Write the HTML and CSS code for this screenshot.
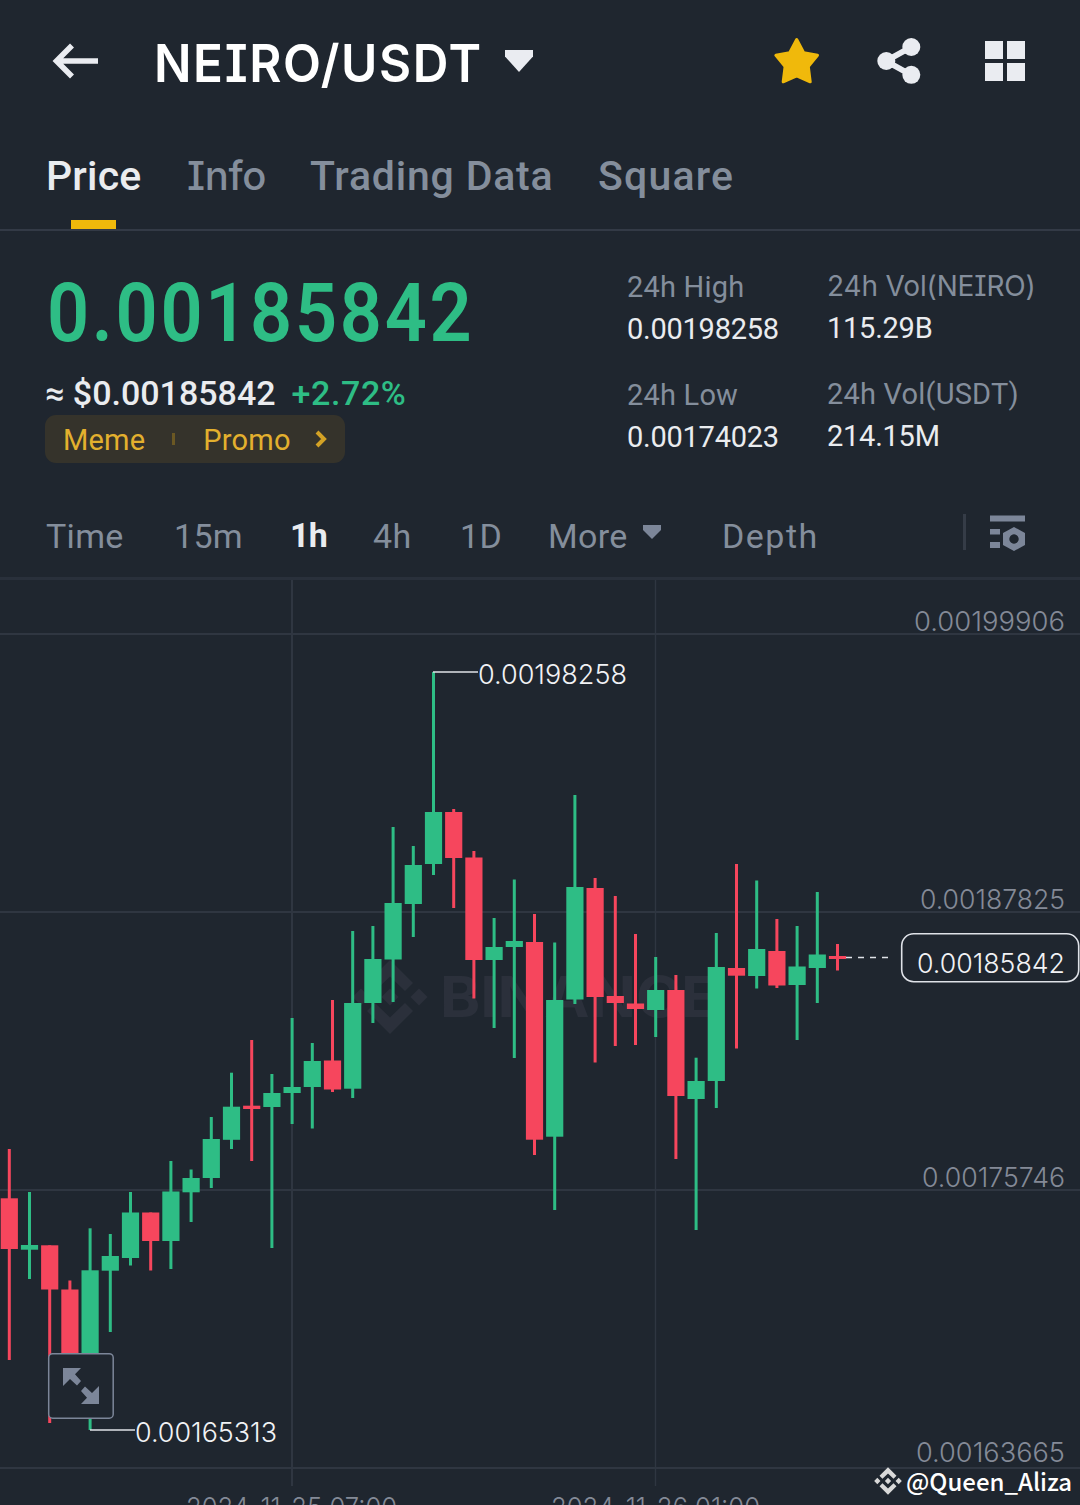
FILE: index.html
```
<!DOCTYPE html>
<html lang="en">
<head>
    <meta charset="UTF-8">
    <meta name="viewport" content="width=device-width, initial-scale=1.0">
    <title>NEIRO/USDT</title>
    <link rel="stylesheet" href="styles.css">
</head>
<body>
    <header class="topbar">
        <svg class="back" width="48" height="48" viewBox="51 37 48 48">
            <path d="M72 45.5L56.5 61L72 76.5M57 61H98"/>
        </svg>
        <h1>NEIRO/USDT</h1>
        <svg class="caret" width="28" height="22" viewBox="0 0 28 22"><path d="M0 0h28v6.5L14 22L0 6.5z"/></svg>
        <div class="actions">
            <svg width="46" height="48" viewBox="774 37 46 48">
                <path class="star" d="M796.7 39.5L803.7 52.7L817.5 55.3L808.3 66.5L810.2 81.8L796.7 75.8L783.2 81.8L785.1 66.5L775.9 55.3L789.7 52.7z"/>
            </svg>
            <svg width="46" height="48" viewBox="876 37 46 48" class="share">
                <path d="M911.3 47L886 61L911.3 75"/>
                <circle cx="911.3" cy="47" r="9"/><circle cx="886.3" cy="61" r="9"/><circle cx="911.3" cy="74.8" r="9"/>
            </svg>
            <svg width="40" height="40" viewBox="0 0 40 40" class="light">
                <path d="M0 0h18v18H0zM22 0h18v18H22zM0 22h18v18H0zM22 22h18v18H22z"/>
            </svg>
        </div>
    </header>

    <nav class="tabs">
        <a class="active">Price</a>
        <a class="info">Info</a>
        <a class="trading">Trading Data</a>
        <a class="square">Square</a>
    </nav>

    <section class="summary">
        <div class="quote">
            <div class="price">0.00185842</div>
            <div class="fiat"><span>≈ $0.00185842</span><span class="change">+2.72%</span></div>
            <div class="tags">
                <span class="meme">Meme</span>
                <i></i>
                <span>Promo</span>
                <svg width="12" height="18" viewBox="0 0 12 18"><path d="M2 2L9 9L2 16"/></svg>
            </div>
        </div>
        <dl class="stats">
            <div><dt>24h High</dt><dd>0.00198258</dd></div>
            <div><dt>24h Low</dt><dd>0.00174023</dd></div>
        </dl>
        <dl class="stats volume">
            <div><dt class="neiro">24h Vol(NEIRO)</dt><dd>115.29B</dd></div>
            <div><dt>24h Vol(USDT)</dt><dd>214.15M</dd></div>
        </dl>
    </section>

    <nav class="intervals">
        <a>Time</a>
        <a>15m</a>
        <a class="active">1h</a>
        <a>4h</a>
        <a>1D</a>
        <a>More <svg width="18" height="14" viewBox="0 0 18 14"><path d="M0 0h18v5L9 14L0 5z"/></svg></a>
        <a class="depth">Depth</a>
        <span class="divider"></span>
        <svg class="settings" width="36" height="37" viewBox="991 515 36 37">
            <path fill-rule="evenodd" d="M991 515.5h35v6H991zM991 529h10v5.5H991zM991 542h10v6H991zM1015 527l11 6v12l-11 6l-11 -6v-12zM1015 534.3a4.7 4.7 0 1 0 .01 0z"/>
        </svg>
    </nav>

    <main class="chart">
        <svg width="1080" height="925" viewBox="0 580 1080 925">
            <defs>
                <symbol id="logo" viewBox="-38 -38 76 76">
                    <path d="M0 -37L23 -14L15 -6L0 -20.500L-15 -6L-23 -14zM0 37L23 14L15 6L0 20.500L-15 6L-23 14zM0 -8.500L8.500 0L0 8.500L-8.500 0zM-29 -8.500L-20.500 0L-29 8.500L-37.500 0zM29 -8.500L37.500 0L29 8.500L20.500 0z"/>
                </symbol>
            </defs>

            <g class="grid">
                <path d="M0 634H1080M0 912H1080M0 1190H1080M0 1468H1080M292 579V1486"/>
                <path class="thin" d="M655.500 579V1486"/>
            </g>

            <g class="watermark">
                <use href="#logo" x="352" y="959" width="76" height="76"/>
                <text x="440" y="1017" textLength="278" lengthAdjust="spacingAndGlyphs">BINANCE</text>
            </g>

            <g class="axis">
                <text x="1065" y="631" textLength="151" lengthAdjust="spacingAndGlyphs">0.00199906</text>
                <text x="1065" y="909" textLength="145" lengthAdjust="spacingAndGlyphs">0.00187825</text>
                <text x="1065" y="1187" textLength="143" lengthAdjust="spacingAndGlyphs">0.00175746</text>
                <text x="1065" y="1462" textLength="149" lengthAdjust="spacingAndGlyphs">0.00163665</text>
                <text x="397" y="1517" textLength="211" lengthAdjust="spacingAndGlyphs">2024-11-25 07:00</text>
                <text x="760" y="1517" textLength="209" lengthAdjust="spacingAndGlyphs">2024-11-26 01:00</text>
            </g>

            <g id="candles"></g>

            <g class="marks">
                <path d="M433 672H478M90 1430H135"/>
                <path class="dash" d="M846 957.500H889"/>
                <rect x="901.700" y="933.700" width="177" height="48" rx="12"/>
                <text x="478" y="684" textLength="149" lengthAdjust="spacingAndGlyphs">0.00198258</text>
                <text x="135" y="1442" textLength="142" lengthAdjust="spacingAndGlyphs">0.00165313</text>
                <text x="917" y="973" textLength="148" lengthAdjust="spacingAndGlyphs">0.00185842</text>
            </g>

            <g class="expand">
                <rect x="48.700" y="1353.700" width="64.500" height="64.500" rx="4"/>
                <path d="M63 1368h18l-6 6.300l6 6.700l-4 4.500l-7 -6.500l-7 7zM99 1404h-18l6 -6.300l-6 -6.700l4 -4.500l7 6.500l7 -7z"/>
            </g>
        </svg>
        <div class="credit">
            <svg width="28" height="28"><use href="#logo"/></svg>
            @Queen_Aliza
        </div>
    </main>

    <script src="chart.js"></script>
</body>
</html>
```
FILE: styles.css
```
* {
    box-sizing: border-box;
}
body {
    margin: 0;
    width: 1080px;
    height: 1505px;
    overflow: hidden;
    background: #1f262f;
    color: #eaecef;
    font-family: Roboto, sans-serif;
}
svg {
    display: block;
    flex: none;
}

/* Header */
.topbar {
    display: flex;
    align-items: center;
    height: 122px;
    padding: 0 55px 0 51px;
}
.back path {
    fill: none;
    stroke: #eaecf1;
    stroke-width: 5.6;
}
h1 {
    width: 349px;
    margin: 4px 0 0 55px;
    color: #fff;
    font-family: Inter, sans-serif;
    font-feature-settings: "cv08";
    font-size: 52px;
    font-weight: 600;
    letter-spacing: 1.7px;
    white-space: nowrap;
    transform: scaleX(0.95);
    transform-origin: 0 0;
}
.caret, .light {
    fill: #eaecf1;
}
.caret {
    margin-left: 2px;
}
.actions {
    display: flex;
    align-items: center;
    margin-left: auto;
    gap: 56px;
}
.actions .light {
    margin-left: 7px;
}
.star {
    fill: #f0b90b;
    stroke: #f0b90b;
    stroke-width: 3;
    stroke-linejoin: round;
}
.share {
    fill: #eaecf1;
}
.share path {
    fill: none;
    stroke: #eaecf1;
    stroke-width: 6;
}

/* Tabs */
.tabs {
    display: grid;
    grid-template-columns: 141px 123px 287px 200px;
    height: 109px;
    padding: 29px 0 0 46px;
    border-bottom: 2px solid #333a46;
    color: #848e9c;
    font-size: 41px;
    font-weight: 500;
    line-height: 50px;
}
.tabs a {
    white-space: nowrap;
}
.tabs .active {
    color: #eaecef;
    letter-spacing: 0.2px;
}
.tabs .active::after {
    content: "";
    display: block;
    width: 45px;
    height: 9px;
    margin: 19px 0 0 25px;
    background: #f0b90b;
}
.tabs .info {
    font-family: Inter, sans-serif;
    font-feature-settings: "cv08";
    font-size: 40px;
    letter-spacing: -0.3px;
}
.tabs .trading {
    letter-spacing: 0.8px;
}
.tabs .square {
    padding-left: 1px;
    letter-spacing: 1.2px;
}

/* Price summary */
.summary {
    display: grid;
    grid-template-columns: 582px 200px 1fr;
    height: 259px;
    padding-left: 45px;
}
.price {
    height: 96px;
    margin: 34px 0 0 2px;
    color: #2ebd85;
    font-size: 82px;
    font-weight: 600;
    letter-spacing: 3px;
    line-height: 96px;
    transform: scaleX(0.9);
    transform-origin: 0 0;
}
.fiat {
    display: flex;
    gap: 16px;
    height: 40px;
    margin-top: 12px;
    font-size: 34px;
    font-weight: 500;
    line-height: 40px;
}
.change {
    color: #2ebd85;
    letter-spacing: 0.6px;
}
.tags {
    display: flex;
    align-items: center;
    width: 300px;
    height: 48px;
    margin-top: 2px;
    padding: 0 18px;
    border-radius: 11px;
    background: #35332b;
    color: #e3b02e;
    font-size: 29px;
    line-height: 36px;
}
.tags span {
    padding-top: 1px;
    letter-spacing: 0.2px;
}
.tags i {
    width: 3px;
    height: 12px;
    margin: 0 28px 0 27px;
    background: #6b5823;
}
.tags svg {
    margin-left: auto;
}
.tags path {
    fill: none;
    stroke: #d3a225;
    stroke-width: 4;
}
.stats {
    margin: 38px 0 0;
    font-size: 29px;
    line-height: 36px;
}
.volume {
    margin-top: 37px;
}
.stats div {
    height: 108px;
}
.stats dt {
    color: #848e9c;
    letter-spacing: 0.2px;
    white-space: nowrap;
}
.stats dd {
    margin: 6px 0 0;
    color: #eaecef;
    letter-spacing: -0.25px;
}
.stats .neiro {
    font-family: Inter, sans-serif;
    font-feature-settings: "cv08";
    font-size: 28px;
    letter-spacing: -0.15px;
}

/* Interval picker */
.intervals {
    display: grid;
    grid-template-columns: 128px 116px 83px 87px 88px 174px 241px 27px 36px;
    height: 90px;
    padding: 24px 0 0 46px;
    border-bottom: 3px solid #29303b;
    color: #848e9c;
    font-size: 34px;
    line-height: 44px;
}
.intervals a {
    display: flex;
    gap: 14px;
    letter-spacing: 0.3px;
}
.intervals a svg {
    margin: 11px 0 0 1px;
    fill: #7c8699;
}
.intervals .active {
    color: #eaecef;
    font-weight: 700;
    letter-spacing: -0.8px;
    line-height: 42px;
}
.intervals .depth {
    letter-spacing: 1.5px;
}
.divider {
    width: 3px;
    height: 36px;
    background: #353c47;
}
.settings {
    margin-top: 1px;
    fill: #7c8699;
}

/* Chart */
.chart {
    position: relative;
    height: 925px;
}
.chart text {
    font-family: Inter, sans-serif;
    font-size: 26.5px;
    font-weight: 300;
}
.watermark {
    fill: #2b303b;
}
.chart .watermark text {
    font-size: 56px;
    font-weight: 700;
}
.grid path {
    fill: none;
    stroke: #2f3641;
    stroke-width: 2;
}
.grid .thin {
    stroke-width: 1.4;
}
.axis {
    fill: #848a97;
    text-anchor: end;
}
.up {
    fill: #2ebd85;
}
.down {
    fill: #f6465d;
}
.marks path, .marks rect {
    fill: none;
    stroke: #dfe2e8;
    stroke-width: 1.6;
}
.marks rect {
    fill: #1f262f;
}
.marks .dash {
    stroke-dasharray: 6;
}
.marks text {
    fill: #f1f2f5;
}
.expand rect {
    fill: #1f262f;
    stroke: #7c8699;
    stroke-width: 1.5;
}
.expand path {
    fill: #7c8699;
}
.credit {
    position: absolute;
    right: 8px;
    bottom: 5px;
    display: flex;
    align-items: center;
    gap: 4px;
    color: #fff;
    fill: #d9d9d9;
    font-family: "Noto Sans CJK SC", sans-serif;
    font-size: 24px;
    font-weight: 500;
    line-height: 38px;
}
```
FILE: chart.js
```
// high, body top, body bottom, low, direction
const candles = [
    [1149, 1198.3, 1249, 1360, 'down'],
    [1192, 1245, 1249.7, 1279, 'up'],
    [1245.3, 1245.3, 1289.5, 1423, 'down'],
    [1280.5, 1289.5, 1380, 1400, 'down'],
    [1228.3, 1270.3, 1380, 1430, 'up'],
    [1234, 1256, 1270.7, 1332, 'up'],
    [1192, 1212.5, 1258, 1265.5, 'up'],
    [1212.5, 1212.5, 1241, 1270.5, 'down'],
    [1161, 1191.5, 1241, 1269, 'up'],
    [1169.5, 1178, 1192.3, 1222, 'up'],
    [1117, 1139, 1178, 1188, 'up'],
    [1072.7, 1106.7, 1139.8, 1149, 'up'],
    [1040, 1105.7, 1109, 1161, 'down'],
    [1074, 1093, 1107, 1248, 'up'],
    [1018, 1087, 1093, 1124, 'up'],
    [1043, 1061, 1087, 1128.5, 'up'],
    [1000, 1060.5, 1089.5, 1092, 'down'],
    [931, 1003, 1088.7, 1098, 'up'],
    [926, 959, 1003, 1023, 'up'],
    [827, 903, 959.5, 1002, 'up'],
    [846, 865, 904, 937, 'up'],
    [672, 812, 864, 875, 'up'],
    [809, 812, 858, 908, 'down'],
    [851, 857.5, 960, 998.5, 'down'],
    [918, 947, 960, 1028, 'up'],
    [879.5, 941, 947, 1058, 'up'],
    [914, 942, 1139.7, 1155, 'down'],
    [942.5, 1000, 1136.7, 1210, 'up'],
    [795, 887, 999.5, 1004, 'up'],
    [878, 888, 997, 1062.5, 'down'],
    [896, 996, 1003, 1046, 'down'],
    [934, 1003.5, 1009, 1045, 'down'],
    [957, 990, 1010, 1037, 'up'],
    [975, 990, 1096, 1159, 'down'],
    [1057.7, 1081, 1099, 1230, 'up'],
    [933, 967, 1081, 1108, 'up'],
    [864, 968, 975.7, 1048.5, 'down'],
    [880.5, 949, 976, 988.5, 'up'],
    [919, 951, 985.5, 988, 'down'],
    [926, 966.5, 985, 1040, 'up'],
    [892, 954.5, 968, 1003, 'up'],
    [944, 956, 959, 970.5, 'down']
];

const group = document.getElementById('candles');

function addRect(x, y, width, height, className) {
    const rect = document.createElementNS('http://www.w3.org/2000/svg', 'rect');
    rect.setAttribute('x', x);
    rect.setAttribute('y', y);
    rect.setAttribute('width', width);
    rect.setAttribute('height', height);
    rect.setAttribute('class', className);
    group.appendChild(rect);
}

candles.forEach(([high, top, bottom, low, direction], i) => {
    const x = 9.3 + i * 20.2;
    addRect(x - 1.5, high, 3, low - high, direction);
    addRect(x - 8.6, top, 17.2, bottom - top, direction);
});
```
